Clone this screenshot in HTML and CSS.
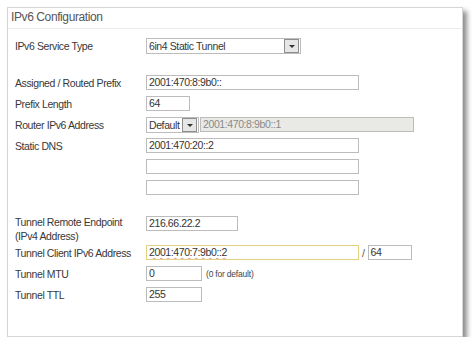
FILE: index.html
```html
<!DOCTYPE html>
<html lang="en">
<head>
    <meta charset="UTF-8">
    <title>IPv6 Configuration</title>
    <link rel="stylesheet" href="styles.css">
</head>
<body>
    <div class="panel">
        <div class="panel-title">IPv6 Configuration</div>

        <div class="form">
            <div class="row">
                <div class="label">IPv6 Service Type</div>
                <div class="select wide-select">
                    <span class="select-text">6in4 Static Tunnel</span>
                    <span class="select-btn"></span>
                </div>
            </div>

            <div class="row spaced">
                <div class="label">Assigned / Routed Prefix</div>
                <div class="field long">2001:470:8:9b0::</div>
            </div>
            <div class="row">
                <div class="label">Prefix Length</div>
                <div class="field tiny">64</div>
            </div>
            <div class="row">
                <div class="label">Router IPv6 Address</div>
                <div class="select small-select">
                    <span class="select-text">Default</span>
                    <span class="select-btn"></span>
                </div>
                <div class="field disabled">2001:470:8:9b0::1</div>
            </div>
            <div class="row">
                <div class="label">Static DNS</div>
                <div class="field long">2001:470:20::2</div>
            </div>
            <div class="row">
                <div class="label"></div>
                <div class="field long"></div>
            </div>
            <div class="row">
                <div class="label"></div>
                <div class="field long"></div>
            </div>

            <div class="row spaced tall">
                <div class="label">Tunnel Remote Endpoint<br>(IPv4 Address)</div>
                <div class="field medium">216.66.22.2</div>
            </div>
            <div class="row">
                <div class="label">Tunnel Client IPv6 Address</div>
                <div class="field long focused"><span class="misspelt">2001:470:7:9b0::2</span></div>
                <span class="slash">/</span>
                <div class="field tiny">64</div>
            </div>
            <div class="row">
                <div class="label">Tunnel MTU</div>
                <div class="field short">0</div>
                <span class="hint">(0 for default)</span>
            </div>
            <div class="row">
                <div class="label">Tunnel TTL</div>
                <div class="field short">255</div>
            </div>
        </div>
    </div>
</body>
</html>
```

FILE: styles.css
```css
body {
    margin: 0;
    padding: 0;
    background-color: #fff;
    font-family: 'Liberation Sans', Arial, sans-serif;
    font-size: 10.5px;
    letter-spacing: -0.4px;
    color: #383838;
}

.panel {
    margin: 7px 0 0 7px;
    width: 456px;
    height: 330px;
    box-sizing: border-box;
    border: 1px solid #d6d6d6;
    background-color: #fff;
    box-shadow: 4px 4px 5px rgba(0, 0, 0, 0.45);
}

.panel-title {
    height: 20px;
    line-height: 19px;
    padding-left: 3px;
    font-size: 12px;
    letter-spacing: -0.4px;
    color: #555;
    border-bottom: 1px solid #ececec;
}

.form {
    padding: 6px 0 0 7px;
}

.row {
    display: flex;
    align-items: center;
    height: 21px;
}

.row.spaced {
    margin-top: 16px;
}

/* two line label, field sits on the first line */
.row.tall {
    height: 28px;
    align-items: flex-start;
}

.row.tall .label {
    line-height: 14px;
    padding-top: 1px;
}

.label {
    width: 131px;
    flex-shrink: 0;
    white-space: nowrap;
}

.field {
    height: 15px;
    line-height: 13px;
    box-sizing: border-box;
    border: 1px solid #bcbcbc;
    padding: 0 2px;
    background-color: #fff;
    color: #333;
    white-space: nowrap;
    overflow: hidden;
}

.long { width: 213px; }
.medium { width: 92px; }
.short { width: 56px; }
.tiny { width: 44px; }

.row.tall .field {
    margin-top: 2px;
}

.field.disabled {
    width: 214px;
    margin-left: 1px;
    background-color: #e9e9e5;
    color: #8a8a8a;
}

.field.focused {
    border-color: #e3cf80;
}

.misspelt {
    text-decoration: underline wavy #e49090;
    text-decoration-thickness: 1px;
}

.slash {
    margin: 0 3px 0 3px;
    color: #555;
}

.hint {
    margin-left: 4px;
    font-size: 8.5px;
    letter-spacing: -0.2px;
    color: #444;
}

.select {
    display: flex;
    align-items: center;
    height: 16px;
    box-sizing: border-box;
    border: 1px solid #bcbcbc;
    padding-left: 2px;
    background-color: #fff;
}

.wide-select { width: 155px; }
.small-select { width: 53px; }

.select-text {
    flex: 1;
    white-space: nowrap;
}

.select-btn {
    position: relative;
    width: 13px;
    height: 12px;
    margin-right: 1px;
    border: 1px solid #8e8e8e;
    background-color: #e6e6e6;
}

.select-btn::after {
    content: "";
    position: absolute;
    left: 4px;
    top: 5px;
    border-left: 3px solid transparent;
    border-right: 3px solid transparent;
    border-top: 3px solid #333;
}
```
